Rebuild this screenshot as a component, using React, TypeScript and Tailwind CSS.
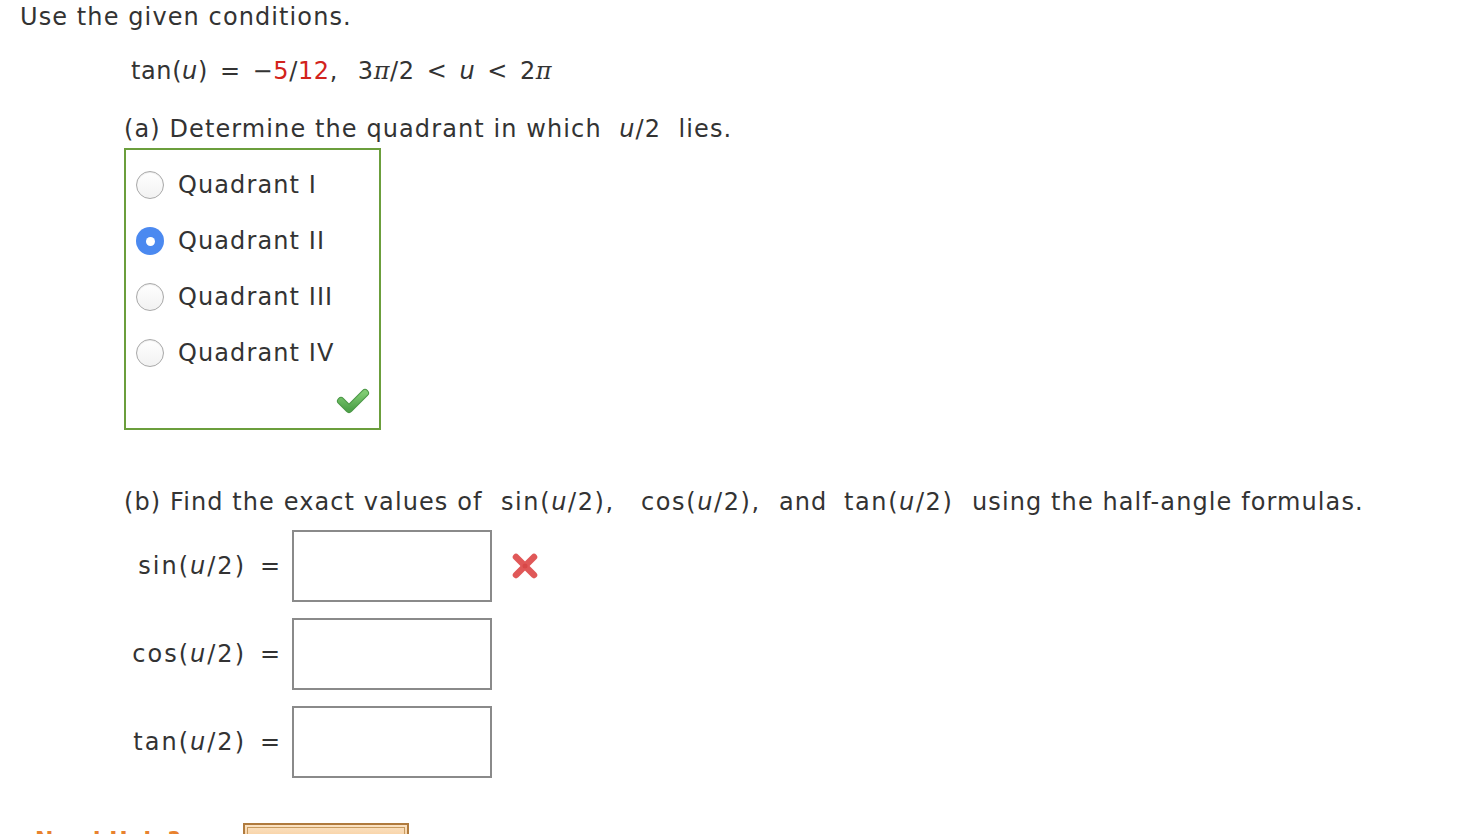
function U() {
  return <i className="italic">u</i>;
}

function Pi() {
  return <i className="italic font-['DejaVu_Serif',serif]">π</i>;
}

function Radio({ checked }: { checked?: boolean }) {
  if (checked) {
    return (
      <span className="flex h-[28px] w-[28px] items-center justify-center rounded-full bg-[#4b89f0]">
        <span className="h-[9px] w-[9px] rounded-full bg-white" />
      </span>
    );
  }
  return (
    <span className="h-[28px] w-[28px] rounded-full border border-[#a9a9a9] bg-gradient-to-b from-white to-[#f2f2f2] shadow-[inset_0_1px_1px_rgba(0,0,0,0.08)]" />
  );
}

function CheckMark() {
  return (
    <svg width="34" height="28" viewBox="0 0 34 28">
      <defs>
        <linearGradient id="ok" x1="0" y1="0" x2="0" y2="1">
          <stop offset="0" stopColor="#7fcb72" />
          <stop offset="1" stopColor="#4fa24a" />
        </linearGradient>
      </defs>
      <polyline
        points="5,14 13,22 29,6"
        fill="none"
        stroke="#4a9645"
        strokeWidth="8"
        strokeLinecap="round"
        strokeLinejoin="round"
      />
      <polyline
        points="5,14 13,22 29,6"
        fill="none"
        stroke="url(#ok)"
        strokeWidth="6"
        strokeLinecap="round"
        strokeLinejoin="round"
      />
    </svg>
  );
}

function Cross() {
  return (
    <svg width="30" height="30" viewBox="0 0 30 30">
      <g stroke="#e05858" strokeWidth="6.5" strokeLinecap="round">
        <line x1="6" y1="6" x2="24" y2="24" />
        <line x1="24" y1="6" x2="6" y2="24" />
      </g>
      <circle cx="15" cy="15" r="2.5" fill="#d84848" />
    </svg>
  );
}

const options = [
  { label: "Quadrant I", checked: false },
  { label: "Quadrant II", checked: true },
  { label: "Quadrant III", checked: false },
  { label: "Quadrant IV", checked: false },
];

const rows = [
  { fn: "sin", wrong: true },
  { fn: "cos", wrong: false },
  { fn: "tan", wrong: false },
];

export default function App() {
  return (
    <div className="h-[834px] overflow-hidden bg-white font-['DejaVu_Sans',Verdana,sans-serif] text-[24px] tracking-[1.1px] text-[#333]">
      <div className="flex h-[34px] items-center pl-[20px]">Use the given conditions.</div>

      {/* given */}
      <div className="mt-[20px] flex h-[34px] items-center pl-[131px] tracking-[0.6px]">
        <span>
          tan(<U />)
        </span>
        <span className="ml-[12px]">=</span>
        <span className="ml-[12px]">
          −<span className="text-[#d2231c]">5</span>/<span className="text-[#d2231c]">12</span>,
        </span>
        <span className="ml-[20px]">
          3<Pi />/2
        </span>
        <span className="ml-[12px]">&lt;</span>
        <span className="ml-[12px]">
          <U />
        </span>
        <span className="ml-[12px]">&lt;</span>
        <span className="ml-[12px]">
          2<Pi />
        </span>
      </div>

      <div className="mt-[24px] flex h-[34px] items-center pl-[124px]">
        (a) Determine the quadrant in which&nbsp;&nbsp;<U />/2&nbsp;&nbsp;lies.
      </div>

      <div className="ml-[124px] mt-[2px] flex h-[282px] w-[257px] flex-col border-2 border-[#6b9e3c] pt-[7px]">
        {options.map((o) => (
          <label key={o.label} className="flex h-[56px] items-center gap-[14px] pl-[10px]">
            <Radio checked={o.checked} />
            <span>{o.label}</span>
          </label>
        ))}
        <div className="flex flex-1 items-start justify-end pr-[9px] pt-[6px]">
          <CheckMark />
        </div>
      </div>

      {/* part b */}
      <div className="mt-[55px] flex h-[34px] items-center whitespace-nowrap pl-[124px]">
        <span className="w-[377px]">(b) Find the exact values of</span>
        <span className="w-[140px] tracking-[1.6px]">
          sin(<U />/2),
        </span>
        <span className="w-[138px] tracking-[1.6px]">
          cos(<U />/2),
        </span>
        <span className="w-[65px]">and</span>
        <span className="w-[128px] tracking-[1.6px]">
          tan(<U />/2)
        </span>
        <span>using the half-angle formulas.</span>
      </div>

      <div className="mt-[11px] flex flex-col gap-[16px]">
        {rows.map((r) => (
          <div key={r.fn} className="flex h-[72px] items-center">
            <span className="w-[246px] text-right tracking-[2px]">
              {r.fn}(<U />/2)
            </span>
            <span className="ml-[14px] w-[32px]">=</span>
            <input
              type="text"
              className="h-[72px] w-[200px] border-2 border-[#8a8a8a] bg-white outline-none"
            />
            {r.wrong && (
              <span className="ml-[18px] flex">
                <Cross />
              </span>
            )}
          </div>
        ))}
      </div>

      <div className="mt-[45px] flex items-start">
        <span className="ml-[35px] w-[208px] text-[22px] font-bold tracking-[0.5px] text-[#e8822e]">
          Need Help?
        </span>
        <button className="h-[34px] w-[166px] border-2 border-[#b07b3e] bg-gradient-to-b from-[#fbe3c4] to-[#f2b46d] p-[2px]">
          <span className="block h-full w-full border border-[#c79a5e]" />
        </button>
      </div>
    </div>
  );
}
